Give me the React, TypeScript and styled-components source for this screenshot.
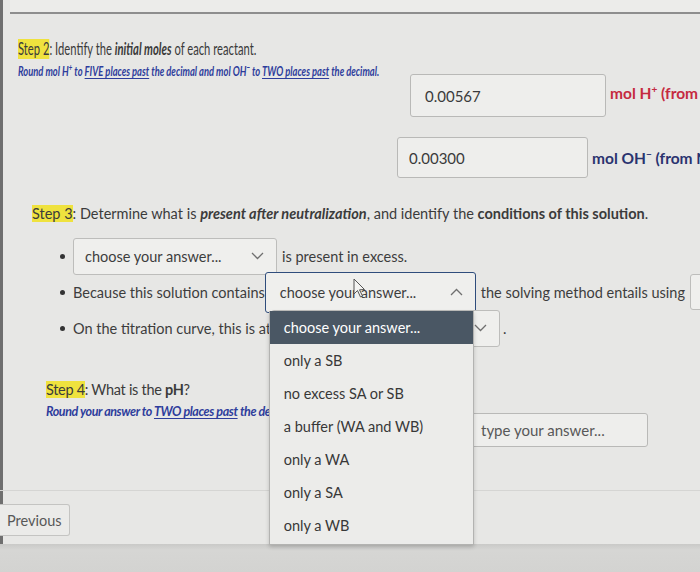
import React from 'react';
import styled, { createGlobalStyle } from 'styled-components';

const GlobalStyle = createGlobalStyle`
  html, body {
    margin: 0;
    padding: 0;
    background: #e7e7e5;
    overflow: hidden;
  }
  body {
    font-family: Lato, "Open Sans", "Liberation Sans", sans-serif;
    color: #3b3b3b;
  }
`;

const Page = styled.div`
  position: relative;
  width: 700px;
  height: 572px;
  overflow: hidden;
  display: flex;
  flex-direction: column;
  background: #e7e7e5;
  box-shadow: inset 3px 0 0 #6f6f6f;
  white-space: nowrap;
`;

const TopBar = styled.div`
  height: 12px;
  margin-left: 10px;
  border-bottom: 2px solid #8e8e8e;
  background: #ececea;
`;

const Block = styled.div<{ $left: number; $top: number }>`
  margin-left: ${(p) => p.$left}px;
  margin-top: ${(p) => p.$top}px;
`;

// the photo squeezes the upper lines sideways, hence the scale
const StepTitle = styled.div<{ $size: number; $spacing?: number; $scale?: number }>`
  font-size: ${(p) => p.$size}px;
  line-height: 18px;
  letter-spacing: ${(p) => p.$spacing ?? 0}px;
  color: #3b3b3b;
  transform: scaleX(${(p) => p.$scale ?? 1});
  transform-origin: left center;
`;

const Highlight = styled.span`
  background: #efe23e;
`;

const Strong = styled.b<{ $italic?: boolean }>`
  font-weight: 700;
  font-style: ${(p) => (p.$italic ? 'italic' : 'normal')};
`;

const Hint = styled.div<{ $spacing?: number; $scale?: number; $size?: number }>`
  font-size: ${(p) => p.$size ?? 12.5}px;
  line-height: 14px;
  font-weight: 700;
  font-style: italic;
  letter-spacing: ${(p) => p.$spacing ?? 0}px;
  color: #2e3d9c;
  margin-top: 6px;
  transform: scaleX(${(p) => p.$scale ?? 1});
  transform-origin: left center;
`;

const U = styled.span`
  text-decoration: underline;
  text-underline-offset: 2px;
`;

const Sup = styled.sup`
  font-size: 0.65em;
  line-height: 0;
`;

const AnswerRow = styled.div<{ $left: number; $top: number }>`
  display: flex;
  align-items: center;
  margin-left: ${(p) => p.$left}px;
  margin-top: ${(p) => p.$top}px;
`;

const NumberBox = styled.div<{ $width: number; $height: number; $pad?: number }>`
  box-sizing: border-box;
  flex-shrink: 0;
  width: ${(p) => p.$width}px;
  height: ${(p) => p.$height}px;
  display: flex;
  align-items: center;
  padding-left: ${(p) => p.$pad ?? 14}px;
  border: 1px solid #b9b9b7;
  border-radius: 3px;
  background: #eeeeec;
  font-size: 15px;
  color: #3a3a3a;
`;

const Placeholder = styled.span`
  color: #585858;
`;

const UnitLabel = styled.span<{ $color: string; $shift?: number }>`
  margin-left: 4px;
  font-size: 15.5px;
  font-weight: 700;
  color: ${(p) => p.$color};
  transform: translateY(${(p) => p.$shift ?? 0}px);
`;

const BulletList = styled.ul`
  list-style: none;
  margin: 15px 0 0 0;
  padding: 0 0 0 60px;
`;

const BulletItem = styled.li`
  display: flex;
  align-items: center;
  height: 36px;
  font-size: 14.5px;
  color: #3d3d3d;
`;

const Dot = styled.span`
  flex-shrink: 0;
  width: 5px;
  height: 5px;
  margin-right: 8px;
  border-radius: 50%;
  background: #333;
`;

const SelectWrap = styled.div`
  position: relative;
  flex-shrink: 0;
`;

const SelectBox = styled.div<{ $width: number; $focused?: boolean }>`
  box-sizing: border-box;
  width: ${(p) => p.$width}px;
  height: ${(p) => (p.$focused ? 41 : 37)}px;
  display: flex;
  align-items: center;
  justify-content: space-between;
  padding: 0 12px 0 ${(p) => (p.$focused ? 14 : 11)}px;
  border: ${(p) => (p.$focused ? '1.5px solid #2f4d7c' : '1px solid #bdbdbb')};
  border-radius: 3px;
  background: #efefed;
  font-size: 14.5px;
  color: #3d3d3d;
`;

const After = styled.span<{ $gap: number }>`
  margin-left: ${(p) => p.$gap}px;
`;

const EdgeBox = styled.div`
  flex-shrink: 0;
  width: 40px;
  height: 34px;
  margin-left: 5px;
  border: 1px solid #bdbdbb;
  border-radius: 3px;
  background: #efefed;
`;

const Menu = styled.div`
  position: absolute;
  left: 4px;
  top: 39px;
  z-index: 5;
  width: 203px;
  padding-bottom: 2px;
  background: #ececea;
  border: 1px solid #b3b3b1;
  border-top: none;
  box-shadow: 0 2px 4px rgba(0, 0, 0, 0.18);
`;

const MenuOption = styled.div<{ $active?: boolean }>`
  height: 33px;
  display: flex;
  align-items: center;
  padding-left: 14px;
  font-size: 14.5px;
  color: ${(p) => (p.$active ? '#ffffff' : '#383838')};
  background: ${(p) => (p.$active ? '#4a5764' : 'transparent')};
`;

const Cursor = styled.svg`
  position: absolute;
  left: 88px;
  top: 6px;
  z-index: 6;
`;

const Divider = styled.div`
  height: 1px;
  margin-top: 43px;
  background: #d5d5d3;
`;

const PrevButton = styled.button`
  box-sizing: border-box;
  width: 70px;
  height: 32px;
  margin-top: 13px;
  padding: 0 0 0 7px;
  text-align: left;
  border: 1px solid #c4c4c2;
  border-left: none;
  border-radius: 0 3px 3px 0;
  background: #ebebe9;
  font-family: inherit;
  font-size: 14.5px;
  color: #585858;
`;

const Footer = styled.div`
  flex: 1;
  margin-top: 8px;
  background: linear-gradient(#c9c9c7, #d6d6d4 6px, #d3d3d1);
`;

function Chevron({ up }: { up?: boolean }) {
  return (
    <svg width="13" height="8" viewBox="0 0 13 8">
      <polyline
        points={up ? '1,7 6.5,1.5 12,7' : '1,1 6.5,6.5 12,1'}
        fill="none"
        stroke="#6f6f6f"
        strokeWidth="1.3"
      />
    </svg>
  );
}

const options = [
  'only a SB',
  'no excess SA or SB',
  'a buffer (WA and WB)',
  'only a WA',
  'only a SA',
  'only a WB',
];

export default function App() {
  return (
    <>
      <GlobalStyle />
      <Page>
        <TopBar />

        <Block $left={18} $top={26}>
          <StepTitle $size={16.5} $scale={0.68}>
            <Highlight>Step 2</Highlight>: Identify the <Strong $italic>initial moles</Strong> of each reactant.
          </StepTitle>
          <Hint $size={13} $scale={0.72}>
            Round mol H<Sup>+</Sup> to <U>FIVE places past</U> the decimal and mol OH<Sup>−</Sup> to{' '}
            <U>TWO places past</U> the decimal.
          </Hint>
        </Block>

        <AnswerRow $left={410} $top={-4}>
          <NumberBox $width={196} $height={43}>0.00567</NumberBox>
          <UnitLabel $color="#c52a40" $shift={-3}>
            mol H<Sup>+</Sup> (from HCl)
          </UnitLabel>
        </AnswerRow>

        <AnswerRow $left={397} $top={20}>
          <NumberBox $width={191} $height={41} $pad={11}>0.00300</NumberBox>
          <UnitLabel $color="#2a336f">
            mol OH<Sup>−</Sup> (from NaOH)
          </UnitLabel>
        </AnswerRow>

        <Block $left={32} $top={27}>
          <StepTitle $size={14.5}>
            <Highlight>Step 3</Highlight>: Determine what is <Strong $italic>present after neutralization</Strong>, and
            identify the <Strong>conditions of this solution</Strong>.
          </StepTitle>
        </Block>

        <BulletList>
          <BulletItem>
            <Dot />
            <SelectWrap>
              <SelectBox $width={204}>
                choose your answer...
                <Chevron />
              </SelectBox>
            </SelectWrap>
            <After $gap={5}>is present in excess.</After>
          </BulletItem>

          <BulletItem>
            <Dot />
            <span>Because this solution contains</span>
            <SelectWrap>
              <SelectBox $width={211} $focused>
                choose your answer...
                <Chevron up />
              </SelectBox>
              <Cursor width="14" height="20" viewBox="0 0 14 20">
                <path d="M1 1 L1 16 L4.5 12.5 L7.5 19 L9.5 18 L6.5 11.8 L11.5 11.5 Z" fill="#f4f4f2" stroke="#555" strokeWidth="1" />
              </Cursor>
              <Menu>
                <MenuOption $active>choose your answer...</MenuOption>
                {options.map((o) => (
                  <MenuOption key={o}>{o}</MenuOption>
                ))}
              </Menu>
            </SelectWrap>
            <After $gap={5}>the solving method entails using</After>
            <EdgeBox />
          </BulletItem>

          <BulletItem>
            <Dot />
            <span>On the titration curve, this is at</span>
            <SelectWrap>
              <SelectBox $width={229}>
                choose your answer...
                <Chevron />
              </SelectBox>
            </SelectWrap>
            <After $gap={3}>.</After>
          </BulletItem>
        </BulletList>

        <Block $left={46} $top={35}>
          <StepTitle $size={14.5} $spacing={-0.3}>
            <Highlight>Step 4</Highlight>: What is the <Strong>pH</Strong>?
          </StepTitle>
          <Hint $spacing={-0.4}>
            Round your answer to <U>TWO places past</U> the decimal.
          </Hint>
        </Block>

        <AnswerRow $left={470} $top={-6}>
          <NumberBox $width={178} $height={34} $pad={10}>
            <Placeholder>type your answer...</Placeholder>
          </NumberBox>
        </AnswerRow>

        <Divider />
        <PrevButton>Previous</PrevButton>
        <Footer />
      </Page>
    </>
  );
}
